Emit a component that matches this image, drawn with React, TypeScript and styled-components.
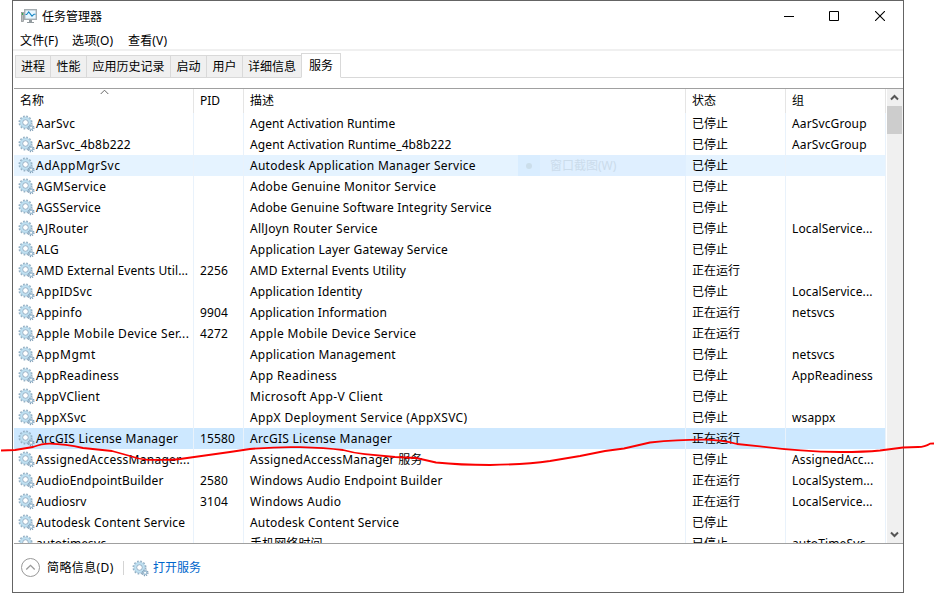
import React from "react";
import styled, { createGlobalStyle, css } from "styled-components";

const Global = createGlobalStyle`
  * { box-sizing: border-box; }
  body { margin: 0; background: #fff; overflow: hidden; }
`;

const Page = styled.div`
  position: relative;
  width: 934px;
  height: 593px;
  padding-left: 12px;
  overflow: hidden;
  font: 12px/21px "Noto Sans", "Noto Sans CJK SC", sans-serif;
  color: #000;
`;

const Window = styled.div`
  display: flex;
  flex-direction: column;
  width: 892px;
  height: 593px;
  border: 1px solid #646464;
  background: #fff;
`;

const TitleBar = styled.header`
  display: flex;
  align-items: center;
  height: 30px;
  flex: none;
  padding-left: 8px;
`;

const Title = styled.div`
  flex: 1;
  padding-left: 5px;
`;

const WindowButtons = styled.div`
  display: flex;
  width: 137px;
  height: 28px;
`;

const WindowButton = styled.div`
  display: flex;
  align-items: center;
  justify-content: center;
  width: 45.6px;
`;

const Menu = styled.nav`
  display: flex;
  flex: none;
  height: 20px;
  padding-left: 7px;
  border-bottom: 2px solid #f0f0f0;
  line-height: 19px;
`;

const MenuItem = styled.div<{ $width: number }>`
  width: ${(p) => p.$width}px;
  white-space: nowrap;
  letter-spacing: 0.15px;
`;

const Tabs = styled.div`
  display: flex;
  align-items: flex-end;
  flex: none;
  height: 27px;
  padding-left: 2px;
`;

const Tab = styled.div<{ $width: number; $active?: boolean }>`
  flex: none;
  width: ${(p) => p.$width}px;
  height: 23px;
  border: 1px solid #d9d9d9;
  border-right: 0;
  background: #f0f0f0;
  line-height: 22px;
  text-align: center;
  ${(p) =>
    p.$active &&
    css`
      height: 25px;
      border-right: 1px solid #d9d9d9;
      border-bottom-color: #fff;
      background: #fff;
      line-height: 23px;
    `}
`;

const TabsRest = styled.div`
  flex: 1;
  height: 1px;
  background: #d9d9d9;
`;

const Table = styled.section`
  display: flex;
  flex: none;
  height: 456px;
  margin: 10px 0 0 1px;
  border-top: 1px solid #a0a0a0;
  border-bottom: 1px solid #a0a0a0;
`;

const Grid = styled.div`
  flex: none;
  width: 872px;
  height: 454px;
  overflow: hidden;
`;

const gridColumns = css`
  display: grid;
  grid-template-columns: 180px 50px 442px 100px 100px;
`;

const HeaderRow = styled.div`
  ${gridColumns}
  height: 24px;
`;

const HeaderCell = styled.div`
  position: relative;
  padding-left: 6px;
  border-right: 1px solid #e5e5e5;
  line-height: 24px;
`;

const SortMark = styled.svg`
  position: absolute;
  left: 86px;
  top: 0;
`;

const Row = styled.div<{ $tone?: "hover" | "selected" }>`
  ${gridColumns}
  height: 21px;
  background: ${(p) => (p.$tone === "selected" ? "#cde8ff" : p.$tone === "hover" ? "#e5f3ff" : "#fff")};
`;

const Cell = styled.div`
  display: flex;
  padding-left: 6px;
  border-right: 1px solid #e9f2fb;
  white-space: pre;
  min-width: 0;
`;

const NameCell = styled(Cell)`
  padding-left: 4px;
`;

const Label = styled.span<{ $extra?: number }>`
  letter-spacing: ${(p) => 0.12 + (p.$extra ?? 0)}px;
`;

const DescriptionCell = styled(Cell)`
  position: relative;
`;

const GhostMenu = styled.div`
  position: absolute;
  left: 274px;
  top: 0;
  display: flex;
  width: 168px;
  height: 21px;
  background: linear-gradient(90deg, #d9edff 22px, #dfefff 22px);
  color: #cbdceb;
`;

const GhostDot = styled.span`
  width: 6px;
  height: 6px;
  margin: 8px 18px 0 8px;
  border-radius: 50%;
  background: #cbdeeb;
`;

const ScrollBar = styled.div`
  display: flex;
  flex-direction: column;
  width: 16px;
  margin-left: 1px;
  background: #f0f0f0;
`;

const ScrollArrow = styled.div`
  display: flex;
  align-items: center;
  justify-content: center;
  width: 15px;
  height: 17px;
`;

const ScrollThumb = styled.div`
  width: 15px;
  height: 28px;
  margin-bottom: auto;
  background: #cdcdcd;
`;

const Footer = styled.footer`
  display: flex;
  align-items: center;
  height: 47px;
  padding-left: 8px;
`;

const FooterLabel = styled.span`
  width: 76px;
  padding-left: 7px;
  white-space: nowrap;
  letter-spacing: 0.4px;
`;

const Divider = styled.span`
  width: 1px;
  height: 14px;
  margin: 0 8px 0 7px;
  background: #d4d4d4;
`;

const Link = styled.span`
  padding-left: 3px;
  color: #0066cc;
`;

const Stroke = styled.svg`
  position: absolute;
  left: 0;
  top: 430px;
  pointer-events: none;
`;

function GearIcon() {
  return (
    <svg width="18" height="20" viewBox="0 0 18 20">
      <circle cx="7.5" cy="9.5" r="6.1" fill="none" stroke="#94b0c4" strokeWidth="1.8" strokeDasharray="1.7 1.494" />
      <circle cx="7.5" cy="9.5" r="4.2" fill="#fff" stroke="#bfe0f1" strokeWidth="2.6" />
      <circle cx="7.5" cy="9.5" r="5.4" fill="none" stroke="#9fc3d8" strokeWidth="0.6" />
      <circle cx="7.5" cy="9.5" r="2.8" fill="#fff" stroke="#7c9cb8" strokeWidth="0.8" />
      <circle cx="13.1" cy="14.8" r="2.8" fill="none" stroke="#819db5" strokeWidth="1.3" strokeDasharray="1.2 0.999" />
      <circle cx="13.1" cy="14.8" r="1.7" fill="#fff" stroke="#9dbdd3" strokeWidth="1.3" />
    </svg>
  );
}

function AppIcon() {
  return (
    <svg width="16" height="16" viewBox="0 0 16 16">
      <rect x="0.5" y="4.5" width="2" height="9" fill="#b9bec0" stroke="#858a8c" strokeWidth="0.7" />
      <rect x="1" y="5" width="1" height="2" fill="#35b04a" />
      <rect x="3.7" y="1.7" width="11.6" height="9.6" fill="#e8f7ff" stroke="#a5adb1" strokeWidth="1.4" />
      <path d="M4.5 6.5h1.2l2-2.5 3.3 4.2 2-2h1.5" fill="none" stroke="#1686c4" strokeWidth="1.1" />
      <path d="M8 12h3v2h2v1H6v-1h2z" fill="#929a9e" />
    </svg>
  );
}

function ScrollChevron({ down = false }: { down?: boolean }) {
  return (
    <svg width="9" height="7" viewBox="0 0 9 7">
      <path d={down ? "M1 1.5l3.5 3.5L8 1.5" : "M1 5.5L4.5 2 8 5.5"} fill="none" stroke="#555" strokeWidth="2" />
    </svg>
  );
}

// The last two numbers are extra tracking for the name and the description.
type Service = [
  name: string, pid: string, description: string, status: string, group: string,
  nameTracking: number, descriptionTracking: number,
];
const stopped = "已停止";
const running = "正在运行";

const services: Service[] = [
  ["AarSvc", "", "Agent Activation Runtime", stopped, "AarSvcGroup", 0.1, -0.04],
  ["AarSvc_4b8b222", "", "Agent Activation Runtime_4b8b222", stopped, "AarSvcGroup", 0.07, 0],
  ["AdAppMgrSvc", "", "Autodesk Application Manager Service", stopped, "", 0.36, 0.14],
  ["AGMService", "", "Adobe Genuine Monitor Service", stopped, "", 0.2, 0.14],
  ["AGSService", "", "Adobe Genuine Software Integrity Service", stopped, "", 0.1, 0.05],
  ["AJRouter", "", "AllJoyn Router Service", stopped, "LocalService...", 0.25, 0.14],
  ["ALG", "", "Application Layer Gateway Service", stopped, "", 0, 0.06],
  ["AMD External Events Util...", "2256", "AMD External Events Utility", running, "", 0, 0],
  ["AppIDSvc", "", "Application Identity", stopped, "LocalService...", 0.2, 0],
  ["Appinfo", "9904", "Application Information", running, "netsvcs", 0.15, 0],
  ["Apple Mobile Device Ser...", "4272", "Apple Mobile Device Service", running, "", 0.27, 0.22],
  ["AppMgmt", "", "Application Management", stopped, "netsvcs", 0.4, 0.05],
  ["AppReadiness", "", "App Readiness", stopped, "AppReadiness", 0.17, 0.23],
  ["AppVClient", "", "Microsoft App-V Client", stopped, "", 0.1, 0.23],
  ["AppXSvc", "", "AppX Deployment Service (AppXSVC)", stopped, "wsappx", 0.25, 0.24],
  ["ArcGIS License Manager", "15580", "ArcGIS License Manager", running, "", 0.14, 0.14],
  ["AssignedAccessManager...", "", "AssignedAccessManager 服务", stopped, "AssignedAcc...", 0.16, 0.13],
  ["AudioEndpointBuilder", "2580", "Windows Audio Endpoint Builder", running, "LocalSystem...", 0.05, 0.14],
  ["Audiosrv", "3104", "Windows Audio", running, "LocalService...", 0, 0.2],
  ["Autodesk Content Service", "", "Autodesk Content Service", stopped, "", 0.08, 0.08],
  ["autotimesvc", "", "手机网络时间", stopped, "autoTimeSvc", 0, 0],
];

const tabs: [string, number][] = [
  ["进程", 35], ["性能", 36], ["应用历史记录", 84], ["启动", 36], ["用户", 36], ["详细信息", 59], ["服务", 40],
];

export default function App() {
  return (
    <Page>
      <Global />
      <Window>
        <TitleBar>
          <AppIcon />
          <Title>任务管理器</Title>
          <WindowButtons>
            <WindowButton>
              <svg width="10" height="10"><path d="M0 5.5h10" stroke="#000" /></svg>
            </WindowButton>
            <WindowButton>
              <svg width="10" height="10"><path d="M.5.5h9v9h-9z" fill="none" stroke="#000" /></svg>
            </WindowButton>
            <WindowButton>
              <svg width="10" height="10"><path d="M0 0l10 10M10 0L0 10" stroke="#000" strokeWidth="1.1" /></svg>
            </WindowButton>
          </WindowButtons>
        </TitleBar>
        <Menu>
          <MenuItem $width={52}>文件(F)</MenuItem>
          <MenuItem $width={56}>选项(O)</MenuItem>
          <MenuItem $width={50}>查看(V)</MenuItem>
        </Menu>
        <Tabs>
          {tabs.map(([label, width]) => (
            <Tab key={label} $width={width} $active={label === "服务"}>{label}</Tab>
          ))}
          <TabsRest />
        </Tabs>
        <Table>
          <Grid>
            <HeaderRow>
              <HeaderCell>
                名称
                <SortMark width="9" height="6"><path d="M.7 5L4.5 1.2 8.3 5" fill="none" stroke="#666" /></SortMark>
              </HeaderCell>
              <HeaderCell>PID</HeaderCell>
              <HeaderCell>描述</HeaderCell>
              <HeaderCell>状态</HeaderCell>
              <HeaderCell>组</HeaderCell>
            </HeaderRow>
            {services.map(([name, pid, description, status, group, nameTracking, descriptionTracking], i) => (
              <Row key={name} $tone={i === 2 ? "hover" : i === 15 ? "selected" : undefined}>
                <NameCell><GearIcon /><Label $extra={nameTracking}>{name}</Label></NameCell>
                <Cell><Label>{pid}</Label></Cell>
                <DescriptionCell>
                  <Label $extra={descriptionTracking}>{description}</Label>
                  {i === 2 && <GhostMenu><GhostDot />窗口截图(W)</GhostMenu>}
                </DescriptionCell>
                <Cell>{status}</Cell>
                <Cell><Label>{group}</Label></Cell>
              </Row>
            ))}
          </Grid>
          <ScrollBar>
            <ScrollArrow><ScrollChevron /></ScrollArrow>
            <ScrollThumb />
            <ScrollArrow><ScrollChevron down /></ScrollArrow>
          </ScrollBar>
        </Table>
        <Footer>
          <svg width="19" height="19" viewBox="0 0 19 19">
            <circle cx="9.5" cy="9.5" r="9" fill="#fff" stroke="#999" />
            <path d="M5.3 11.5l4.2-4.2 4.2 4.2" fill="none" stroke="#999" strokeWidth="1.3" />
          </svg>
          <FooterLabel>简略信息(D)</FooterLabel>
          <Divider />
          <GearIcon />
          <Link>打开服务</Link>
        </Footer>
      </Window>
      <Stroke width="934" height="50" viewBox="0 430 934 50">
        <path
          d="M1 450.5L15 450L33 447Q43 443.5 50 443.7Q65 444 83 448L112 451L130 456Q139 459.5 148 459.8Q168 460.3 180 459L230 452L250 449Q280 446.5 300 447.2Q325 448 343 450Q355 453.3 365 454.2L395 457L416 458L425 460L436 462.5Q460 465 490 465Q525 464.5 550 461L580 456L605 451L624 448.5L650 442.5Q680 439.5 705 439.7Q722 440 737 444L760 446.3Q800 451.5 840 452Q865 452 880 450.5L903 447.5L918 447Q925 446.8 930 443.7L934 443.5"
          fill="none"
          stroke="#fb0000"
          strokeWidth="1.8"
          strokeLinejoin="round"
        />
      </Stroke>
    </Page>
  );
}
